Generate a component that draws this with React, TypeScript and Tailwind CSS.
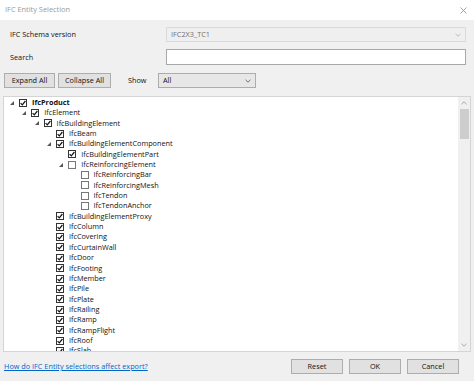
import React from "react";

type Node = { label: string; level: number; expander?: boolean; checked: boolean; bold?: boolean };

const ROWS: Node[] = [
  { label: "IfcProduct", level: 0, expander: true, checked: true, bold: true },
  { label: "IfcElement", level: 1, expander: true, checked: true },
  { label: "IfcBuildingElement", level: 2, expander: true, checked: true },
  { label: "IfcBeam", level: 3, checked: true },
  { label: "IfcBuildingElementComponent", level: 3, expander: true, checked: true },
  { label: "IfcBuildingElementPart", level: 4, checked: true },
  { label: "IfcReinforcingElement", level: 4, expander: true, checked: false },
  { label: "IfcReinforcingBar", level: 5, checked: false },
  { label: "IfcReinforcingMesh", level: 5, checked: false },
  { label: "IfcTendon", level: 5, checked: false },
  { label: "IfcTendonAnchor", level: 5, checked: false },
  { label: "IfcBuildingElementProxy", level: 3, checked: true },
  { label: "IfcColumn", level: 3, checked: true },
  { label: "IfcCovering", level: 3, checked: true },
  { label: "IfcCurtainWall", level: 3, checked: true },
  { label: "IfcDoor", level: 3, checked: true },
  { label: "IfcFooting", level: 3, checked: true },
  { label: "IfcMember", level: 3, checked: true },
  { label: "IfcPile", level: 3, checked: true },
  { label: "IfcPlate", level: 3, checked: true },
  { label: "IfcRailing", level: 3, checked: true },
  { label: "IfcRamp", level: 3, checked: true },
  { label: "IfcRampFlight", level: 3, checked: true },
  { label: "IfcRoof", level: 3, checked: true },
  { label: "IfcSlab", level: 3, checked: true },
];

function Chevron({ color = "#606060" }: { color?: string }) {
  return (
    <svg width="6" height="4" viewBox="0 0 6 4">
      <path d="M0.5 0.8 L3 3.2 L5.5 0.8" fill="none" stroke={color} strokeWidth="0.9" />
    </svg>
  );
}

function Check({ checked }: { checked: boolean }) {
  return (
    <span
      className={
        "flex h-[8px] w-[8px] shrink-0 items-center justify-center border bg-white " +
        (checked ? "border-[#333]" : "border-[#777]")
      }
    >
      {checked && (
        <svg width="6" height="6" viewBox="0 0 6 6">
          <path d="M0.6 3.1 L2.3 4.8 L5.4 1" fill="none" stroke="#111" strokeWidth="1.2" />
        </svg>
      )}
    </span>
  );
}

function Btn({ label, className }: { label: string; className?: string }) {
  return (
    <button
      type="button"
      className={
        "flex h-[15px] items-center justify-center border border-[#adadad] bg-[#e1e1e1] text-[7.3px] text-[#111] " +
        (className ?? "")
      }
    >
      {label}
    </button>
  );
}

export default function App() {
  return (
    <div
      className="flex h-[381px] w-[474px] flex-col overflow-hidden bg-[#f0f0f0] text-[#111]"
      style={{ fontFamily: '"Open Sans", "Noto Sans", sans-serif' }}
    >
      {/* title bar */}
      <div className="flex h-[20px] items-center justify-between bg-white pl-[5px] pr-[7px]">
        <span className="text-[7.4px] text-[#9a9a9a]">IFC Entity Selection</span>
        <svg width="7" height="7" viewBox="0 0 7 7">
          <path d="M0.5 0.5 L6.5 6.5 M6.5 0.5 L0.5 6.5" stroke="#8a8a8a" strokeWidth="0.8" />
        </svg>
      </div>

      <div className="flex flex-1 flex-col px-[3px]">
        <div className="mt-[7px] flex h-[15px] items-center">
          <span className="w-[163px] pl-[7px] text-[7.3px]">IFC Schema version</span>
          <div className="flex h-full w-[300px] items-center justify-between border border-[#dadada] bg-[#efefef] pl-[4px] pr-[4px]">
            <span className="text-[7.3px] text-[#707070]">IFC2X3_TC1</span>
            <Chevron color="#b8b8b8" />
          </div>
        </div>

        <div className="mt-[7px] flex h-[16px] items-center">
          <span className="w-[163px] pl-[7px] text-[7.3px]">Search</span>
          <div className="h-full w-[300px] border border-[#a8a8a8] bg-white" />
        </div>

        <div className="mt-[8px] flex h-[15px] items-center">
          <Btn label="Expand All" className="ml-[1px] w-[51px]" />
          <Btn label="Collapse All" className="ml-[3px] w-[53px]" />
          <span className="ml-[17px] w-[30px] text-[7.3px]">Show</span>
          <div className="flex h-full w-[98px] items-center justify-between border border-[#acacac] bg-[#e7e7e7] pl-[4px] pr-[4px]">
            <span className="text-[7.3px]">All</span>
            <Chevron />
          </div>
        </div>

        {/* tree */}
        <div className="mt-[8px] flex h-[256px] w-[468px] border border-[#d4d4d4] bg-white">
          <div className="flex-1 overflow-hidden pt-[0.5px]">
            {ROWS.map((r) => (
              <div
                key={r.label}
                className="flex h-[10.35px] items-center"
                style={{ paddingLeft: 4 + r.level * 12.3 }}
              >
                <span className="flex w-[11px] shrink-0 items-center pl-[2px]">
                  {r.expander && (
                    <svg width="4" height="4" viewBox="0 0 4 4">
                      <path d="M4 0 L4 4 L0 4 Z" fill="#555" />
                    </svg>
                  )}
                </span>
                <Check checked={r.checked} />
                <span
                  className={
                    "ml-[5px] whitespace-nowrap text-[7.3px] leading-none " + (r.bold ? "font-bold" : "")
                  }
                >
                  {r.label}
                </span>
              </div>
            ))}
          </div>
          <div className="flex w-[12px] flex-col items-center bg-[#f0f0f0]">
            <div className="flex h-[12px] items-center">
              <span className="rotate-180">
                <Chevron color="#a0a0a0" />
              </span>
            </div>
            <div className="h-[30px] w-[9px] bg-[#cdcdcd]" />
            <div className="flex-1" />
            <div className="flex h-[12px] items-center">
              <Chevron color="#a0a0a0" />
            </div>
          </div>
        </div>

        <div className="mt-[7px] flex h-[15px] items-center">
          <a href="#" className="ml-[1px] text-[7.3px] text-[#0066cc] underline">
            How do IFC Entity selections affect export?
          </a>
          <div className="flex-1" />
          <Btn label="Reset" className="w-[52px]" />
          <Btn label="OK" className="ml-[6px] w-[52px]" />
          <Btn label="Cancel" className="ml-[6px] mr-[12px] w-[52px]" />
        </div>
      </div>
    </div>
  );
}
